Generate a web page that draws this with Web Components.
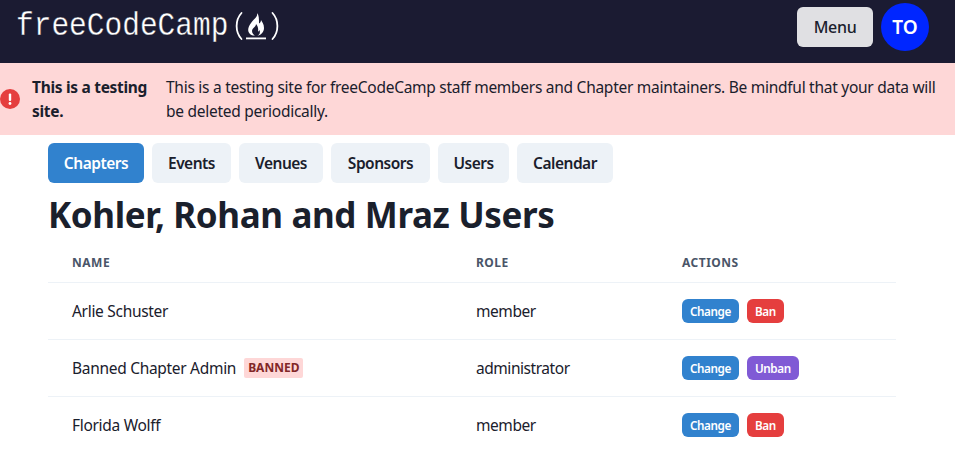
<!DOCTYPE html>
<html lang="en"><head><meta charset="utf-8"><title>Users</title>
<style>
html,body{margin:0;padding:0;background:#fff;overflow:hidden;height:450px}
body{font-family:"Noto Sans","Open Sans",sans-serif;font-size:15.5px;color:#1a202c;letter-spacing:-.3px}
</style></head><body>
<fcc-header></fcc-header>
<fcc-alert title-text="This is a testing site.">This is a testing site for freeCodeCamp staff members and Chapter maintainers. Be mindful that your data will be deleted periodically.</fcc-alert>
<fcc-main>
  <fcc-tabs slot="tabs">
    <fcc-tab active>Chapters</fcc-tab><fcc-tab>Events</fcc-tab><fcc-tab>Venues</fcc-tab><fcc-tab>Sponsors</fcc-tab><fcc-tab>Users</fcc-tab><fcc-tab>Calendar</fcc-tab>
  </fcc-tabs>
  <h1 slot="title">Kohler, Rohan and Mraz Users</h1>
  <user-table>
    <user-row name="Arlie Schuster" role="member" action="Ban"></user-row>
    <user-row name="Banned Chapter Admin" role="administrator" action="Unban" banned></user-row>
    <user-row name="Florida Wolff" role="member" action="Ban"></user-row>
  </user-table>
</fcc-main>
<script>
const def=(n,html)=>customElements.define(n,class extends HTMLElement{
  connectedCallback(){ if(this.shadowRoot)return; const r=this.attachShadow({mode:'open'}); r.innerHTML=typeof html==='function'?html(this):html; }
});
def('fcc-header',`<style>
:host{display:flex;height:63px;background:#1b1b32;align-items:flex-start;justify-content:space-between;padding:0 26px 0 16px;box-sizing:border-box;color:#fff}
.logo{display:flex;align-items:center;height:52px}
.t{font:400 29.5px/1 "Liberation Mono",monospace;letter-spacing:0;transform:scaleY(1.1);-webkit-text-stroke:.3px #1b1b32;margin-top:2px}
svg{display:block;margin-left:2px}
.right{display:flex;gap:8px;align-items:center;margin-top:3px}
button{all:unset;box-sizing:border-box;width:76px;height:40px;background:#e0e0e3;border-radius:6px;color:#1a202c;font:500 16px "Noto Sans",sans-serif;letter-spacing:-.3px;text-align:center}
.av{width:48px;height:48px;border-radius:50%;background:#0026ff;color:#fff;display:grid;place-items:center;font:600 19px "Noto Sans",sans-serif;letter-spacing:0}
</style>
<div class="logo"><span class="t">freeCodeCamp</span>
<svg width="54" height="32" viewBox="0 0 54 32" fill="none"><path d="M11.500 3C5 10 5 22 11.500 29" stroke="#fff" stroke-width="1.8" stroke-linecap="round"/><path d="M42.500 3C49 10 49 22 42.500 29" stroke="#fff" stroke-width="1.8" stroke-linecap="round"/><path fill-rule="evenodd" d="M27 3C28 7 24 9 21 13C18 17 17 21 20 24C21 25 23 25.500 24 25.500L28 25.500C31 25 34 22 34 18C34 14 32 12 31 10C31 12 30 13 29 13.500C29 9 29 5 27 3ZM26 14C26 17 22 18 22 21C22 23.500 24 25 25 25.500L27.500 25.500C29.500 24.500 30.500 22.500 29.500 20C29 21 28.500 21.500 28 21.500C28.500 19 28 16 26 14Z" fill="#fff"/><rect x="16" y="27.500" width="20" height="1.800" fill="#fff"/></svg></div>
<div class="right"><button>Menu</button><div class="av">TO</div></div>`);
def('fcc-alert',e=>`<style>
:host{display:flex;align-items:center;background:#fed7d7;height:72px;box-sizing:border-box;padding-right:16px;line-height:24px}
svg{flex:none;display:block;margin-right:12px}
b{flex:none;width:122px;margin-right:12px;font-weight:700;color:#1a202c}
span{flex:1;color:#1a202c;letter-spacing:-.27px}
</style>
<svg width="20" height="20" viewBox="0 0 20 20"><circle cx="10" cy="10" r="10" fill="#e53e3e"/><rect x="8.800" y="4.500" width="2.400" height="7.500" rx="1" fill="#fff"/><circle cx="10" cy="14.500" r="1.400" fill="#fff"/></svg>
<b>${e.getAttribute('title-text')}</b><span><slot></slot></span>`);
def('fcc-main',`<style>
:host{display:block;padding:8px 59px 0 48px}
::slotted(h1){margin:0;font-size:35px;line-height:40px;font-weight:700;letter-spacing:-.38px;color:#1a202c;padding:12px 0 8px}
</style><slot name="tabs"></slot><slot name="title"></slot><slot></slot>`);
def('fcc-tabs',`<style>:host{display:grid;grid-template-columns:96px 79px 84px 99px 71px 96px;gap:8px}</style><slot></slot>`);
def('fcc-tab',e=>`<style>
:host{display:block;height:40px;box-sizing:border-box;border-radius:6px;line-height:40px;text-align:center;font-weight:600;letter-spacing:-.5px;background:${e.hasAttribute('active')?'#3182ce':'#edf2f7'};color:${e.hasAttribute('active')?'#fff':'#1a202c'}}
</style><slot></slot>`);
def('user-table',`<style>
:host{display:block}
.h{display:grid;grid-template-columns:404px 206px 238px;height:40px;border-bottom:1px solid #edf2f7;box-sizing:border-box;align-items:center;font-size:12px;font-weight:700;letter-spacing:.5px;color:#4a5568}
.h div{padding-left:24px}
</style><div class="h"><div>NAME</div><div>ROLE</div><div>ACTIONS</div></div><slot></slot>`);
def('user-row',e=>{const a=e.getAttribute('action');return `<style>
:host{display:grid;grid-template-columns:404px 206px 238px;height:57px;border-bottom:1px solid #edf2f7;box-sizing:border-box;align-items:center;color:#1a202c}
.c{padding-left:24px;display:flex;align-items:center}
.r{letter-spacing:-.45px}
.badge{margin-left:8px;background:#fed7d7;color:#822727;font-size:12px;font-weight:700;line-height:20px;padding:0 4px;border-radius:2px;letter-spacing:0}
.btn{height:24px;line-height:24px;padding:0 8px;border-radius:6px;color:#fff;font-size:11.7px;font-weight:600;letter-spacing:-.4px;background:#3182ce}
.btn+.btn{margin-left:8px}
.Ban{background:#e53e3e}.Unban{background:#805ad5}
</style><div class="c">${e.getAttribute('name')}${e.hasAttribute('banned')?'<span class="badge">BANNED</span>':''}</div><div class="c r">${e.getAttribute('role')}</div><div class="c"><span class="btn">Change</span><span class="btn ${a}">${a}</span></div>`});
</script></body></html>
